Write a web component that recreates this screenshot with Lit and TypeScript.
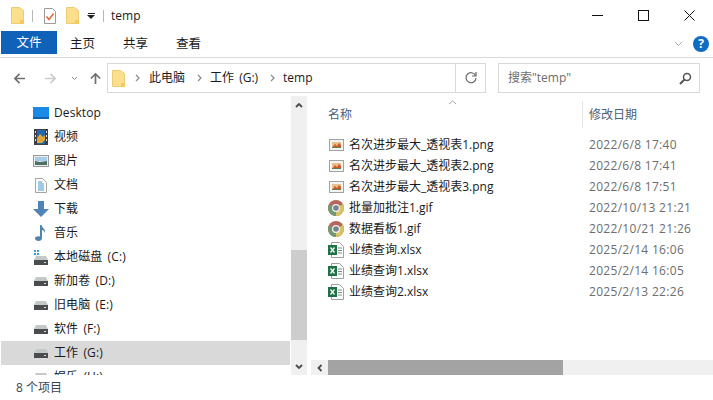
import { LitElement, html, css, svg } from 'lit';
import { customElement } from 'lit/decorators.js';

const folder = html`<svg class="folder" width="13" height="17" viewBox="0 0 13 17">
	<path d="M.5.500h8l4 3v13H.5z" fill="#fbdf8c" stroke="#eccb72" />
	<path d="M9 17v-4h4v4z" fill="#f6c95c" />
</svg>`;

const checkDoc = html`<svg width="12" height="16" viewBox="0 0 12 16">
	<path d="M.5.5h8l3 3v12H.5z" fill="#fff" stroke="#9a9a9a" />
	<path d="M2.500 8.500l2.500 3 4.500-6" fill="none" stroke="#e0693a" stroke-width="1.600" />
</svg>`;

const desktopIcon = html`<svg width="16" height="12" viewBox="0 0 16 12">
	<rect width="16" height="12" fill="#1a8ae6" />
	<rect y="10" width="16" height="2" fill="#0d63ad" />
</svg>`;

const videoIcon = html`<svg width="14" height="16" viewBox="0 0 14 16">
	<rect width="14" height="16" fill="#3c3f45" />
	<rect x="3" y="1" width="8" height="14" fill="#2467ad" />
	<path d="M3 9l3-4 3 3 2-2v5l-3 3H3z" fill="#e0a63a" />
	<path d="M1 2h1v2H1zm0 4h1v2H1zm0 4h1v2H1zm11-8h1v2h-1zm0 4h1v2h-1zm0 4h1v2h-1z" fill="#ddd" />
</svg>`;

const pictureIcon = html`<svg width="16" height="12" viewBox="0 0 16 12">
	<rect x=".5" y=".5" width="15" height="11" fill="#e8edf2" stroke="#9a9a9a" />
	<rect x="2" y="2" width="12" height="4" fill="#a8cbe8" />
	<path d="M2 6l5 1 7-1v4H2z" fill="#4f7164" />
</svg>`;

const docIcon = html`<svg width="12" height="15" viewBox="0 0 12 15">
	<path d="M.5.5h7l4 4v10H.5z" fill="#fdfdfd" stroke="#a5a5a5" />
	<path d="M3 4h4M3 6h6M3 8h6M3 10h6M3 12h6" stroke="#3f98cf" />
</svg>`;

const downloadIcon = html`<svg width="16" height="16" viewBox="0 0 16 16">
	<path d="M5 0h6v8h5l-8 8-8-8h5z" fill="#4f84b8" />
</svg>`;

const musicIcon = html`<svg width="12" height="16" viewBox="0 0 12 16">
	<path d="M5 0h1.500c.5 3 4.500 4 3.500 8-.5-2-2-3-3-3v8c0 2-1.500 3-3.500 3S0 15 0 13.500 2 11 5 11.500z" fill="#4f84ac" />
</svg>`;

const driveIcon = html`<svg width="14" height="10" viewBox="0 0 14 10">
	<path d="M2 1h10l2 4H0z" fill="#c4c8c8" />
	<rect y="5" width="14" height="5" fill="#4a4d50" />
	<rect x="10" y="7" width="2" height="1" fill="#ddd" />
</svg>`;

const systemDriveIcon = html`<svg width="14" height="15" viewBox="0 0 14 15">
	<path d="M0 0h2v2H0zm3 0h2v2H3zM0 3h2v2H0zm3 0h2v2H3z" fill="#3aa0dc" />
	<path d="M2 6h10l2 4H0z" fill="#c4c8c8" />
	<rect y="10" width="14" height="5" fill="#4a4d50" />
	<rect x="10" y="12" width="2" height="1" fill="#ddd" />
</svg>`;

const imageFile = html`<svg width="15" height="12" viewBox="0 0 15 12">
	<rect x=".5" y=".5" width="14" height="11" fill="#f4f4f4" stroke="#a2a2a2" />
	<rect x="3" y="3" width="9" height="6" fill="#e9c08c" />
	<path d="M3 9l3-4 2 2 2-3 2 2v3z" fill="#cf5a2e" />
	<path d="M3 8h9v1H3z" fill="#5f7d4a" />
</svg>`;

const chromeFile = html`<svg width="16" height="16" viewBox="0 0 16 16">
	<circle cx="8" cy="8" r="8" fill="#b5655a" />
	<path d="M8 8L14.900 4A8 8 0 0 1 8 16z" fill="#d8c468" />
	<path d="M8 8L8 16A8 8 0 0 1 1.100 4z" fill="#6f9a72" />
	<circle cx="8" cy="8" r="4" fill="#f2f2f2" />
	<circle cx="8" cy="8" r="2.800" fill="#77838c" />
</svg>`;

const excelFile = html`<svg width="16" height="16" viewBox="0 0 16 16">
	<path d="M3.500.5h8l4 4v11h-12z" fill="#fff" stroke="#9aa0a0" />
	<path d="M10 6h4M10 8.500h4M10 11h4" stroke="#7b8a85" />
	<rect y="3" width="9" height="10" fill="#1e7145" />
	<path d="M2.500 5.500l4 5m0-5l-4 5" stroke="#fff" stroke-width="1.300" />
</svg>`;

const chevronRight = html`<svg class="crumb-sep" width="5" height="8" viewBox="0 0 5 8">
	<path d="M1 1l3 3-3 3" fill="none" stroke="#8a8a8a" stroke-width="1.200" />
</svg>`;

const arrow = (d: string, color: string) => html`<svg width="13" height="13" viewBox="0 0 14 14">
	${svg`<path d=${d} fill="none" stroke=${color} stroke-width="1.800" />`}
</svg>`;

const scrollChevron = (d: string, w = 8, h = 8) => html`<svg width=${w} height=${h} viewBox="0 0 8 8">
	${svg`<path d=${d} fill="none" stroke="#4a4a4a" stroke-width="1.800" />`}
</svg>`;

const navItems = [
	{ icon: desktopIcon, label: 'Desktop' },
	{ icon: videoIcon, label: '视频' },
	{ icon: pictureIcon, label: '图片' },
	{ icon: docIcon, label: '文档' },
	{ icon: downloadIcon, label: '下载' },
	{ icon: musicIcon, label: '音乐' },
	{ icon: systemDriveIcon, label: '本地磁盘 (C:)' },
	{ icon: driveIcon, label: '新加卷 (D:)' },
	{ icon: driveIcon, label: '旧电脑 (E:)' },
	{ icon: driveIcon, label: '软件 (F:)' },
	{ icon: driveIcon, label: '工作 (G:)', selected: true },
	{ icon: driveIcon, label: '娱乐 (H:)' },
];

const files = [
	{ icon: imageFile, name: '名次进步最大_透视表1.png', date: '2022/6/8 17:40' },
	{ icon: imageFile, name: '名次进步最大_透视表2.png', date: '2022/6/8 17:41' },
	{ icon: imageFile, name: '名次进步最大_透视表3.png', date: '2022/6/8 17:51' },
	{ icon: chromeFile, name: '批量加批注1.gif', date: '2022/10/13 21:21' },
	{ icon: chromeFile, name: '数据看板1.gif', date: '2022/10/21 21:26' },
	{ icon: excelFile, name: '业绩查询.xlsx', date: '2025/2/14 16:06' },
	{ icon: excelFile, name: '业绩查询1.xlsx', date: '2025/2/14 16:05' },
	{ icon: excelFile, name: '业绩查询2.xlsx', date: '2025/2/13 22:26' },
];

@customElement('app-root')
export class AppRoot extends LitElement {
	static styles = css`
		:host {
			display: flex;
			flex-direction: column;
			width: 713px;
			height: 400px;
			overflow: hidden;
			background: #fff;
			color: #1a1a1a;
			font: 12px/16px 'Open Sans', 'Noto Sans CJK SC', sans-serif;
		}
		svg {
			flex: none;
		}
		.titlebar {
			display: flex;
			align-items: center;
			height: 31px;
			flex: none;
			padding-left: 11px;
		}
		.titlebar .divider {
			width: 1px;
			height: 12px;
			background: #b8b8b8;
			margin: 0 11px 0 8px;
		}
		.titlebar .qa-gap {
			width: 10px;
		}
		.dropdown {
			display: flex;
			margin-left: 8px;
			flex-direction: column;
			gap: 1px;
			align-items: center;
		}
		.dropdown i {
			display: block;
			width: 7px;
			height: 1px;
			background: #222;
		}
		.dropdown b {
			display: block;
			border: 4px solid transparent;
			border-bottom: 0;
			border-top-color: #222;
		}
		.titlebar .title {
			margin-left: -4px;
		}
		.window-buttons {
			margin-left: auto;
			display: flex;
			padding-right: 1px;
		}
		.window-buttons div {
			width: 46px;
			height: 30px;
			display: flex;
			align-items: center;
			justify-content: center;
		}
		.tabs {
			display: flex;
			align-items: center;
			height: 26px;
			flex: none;
			padding-left: 1px;
			border-bottom: 1px solid #dadada;
			box-sizing: content-box;
		}
		.tabs .tab {
			width: 53px;
			text-align: center;
			margin-bottom: 1px;
			font-size: 12.5px;
		}
		.tabs .tab.file {
			width: 56px;
			height: 23px;
			line-height: 23px;
			margin: 0 -1px 3px 0;
			background: #0f62b8;
			color: #fff;
		}
		.tabs .tail {
			margin-left: auto;
			display: flex;
			align-items: center;
			gap: 10px;
			padding-right: 4px;
		}
		.help {
			width: 16px;
			height: 16px;
			border-radius: 50%;
			background: #0e6cc4;
			color: #fff;
			font-weight: 700;
			font-size: 12px;
			line-height: 16px;
			text-align: center;
		}
		.nav {
			display: flex;
			align-items: center;
			height: 30px;
			flex: none;
			margin-top: 5px;
			padding-left: 13px;
		}
		.nav .arrows {
			display: flex;
			align-items: center;
			width: 94px;
		}
		.nav .forward {
			display: flex;
			margin: 0 14px 0 18px;
		}
		.nav .recent {
			margin-right: 11px;
		}
		.address {
			display: flex;
			align-items: center;
			width: 379px;
			height: 30px;
			box-sizing: border-box;
			border: 1px solid #d9d9d9;
			padding-left: 4px;
		}
		.address .folder {
			margin-right: 10px;
		}
		.address .crumb-sep {
			margin-right: 8px;
		}
		.address .folder + .crumb-sep {
			margin-right: 9px;
		}
		.address span {
			margin-right: 12px;
			word-spacing: 2px;
		}
		.address .refresh {
			margin-left: auto;
			width: 29px;
			height: 28px;
			border-left: 1px solid #d9d9d9;
			display: flex;
			align-items: center;
			justify-content: center;
		}
		.search {
			display: flex;
			align-items: center;
			justify-content: space-between;
			width: 202px;
			height: 30px;
			box-sizing: border-box;
			margin-left: 12px;
			padding: 0 7px 0 9px;
			border: 1px solid #d9d9d9;
			color: #6d6d6d;
		}
		.main {
			display: flex;
			flex: 1;
			min-height: 0;
			margin-top: 3px;
		}
		.sidebar {
			display: flex;
			width: 311px;
			flex: none;
		}
		.tree {
			width: 289px;
			margin-left: 1px;
			padding-top: 5px;
			overflow: hidden;
		}
		.tree-row {
			display: flex;
			align-items: center;
			height: 24px;
			word-spacing: 2px;
			letter-spacing: 0.1px;
		}
		.tree-row.selected {
			background: #d9d9d9;
		}
		.tree-row .icon {
			display: flex;
			justify-content: center;
			width: 16px;
			margin: 0 5px 0 32px;
		}
		.vscroll {
			display: flex;
			flex-direction: column;
			width: 16px;
			margin-left: 1px;
			background: #f0f0f0;
		}
		.vscroll .end {
			height: 17px;
			display: flex;
			align-items: center;
			justify-content: center;
			flex: none;
		}
		.vscroll .track {
			flex: 1;
			padding-top: 137px;
		}
		.vscroll .thumb {
			height: 90px;
			background: #cdcdcd;
		}
		.pane {
			display: flex;
			flex-direction: column;
			flex: 1;
			min-width: 0;
		}
		.list {
			flex: 1;
			min-height: 0;
			position: relative;
		}
		.header {
			display: flex;
			align-items: center;
			height: 27px;
			margin-top: 5px;
			color: #4c607a;
			padding-left: 17px;
		}
		.header .name-col {
			width: 254px;
		}
		.header .date-col {
			border-left: 1px solid #e5e5e5;
			height: 27px;
			line-height: 27px;
			padding-left: 6px;
		}
		.sort {
			position: absolute;
			left: 137px;
			top: 4px;
		}
		.rows {
			margin-top: 6px;
		}
		.file-row {
			display: flex;
			align-items: center;
			height: 21px;
			padding-left: 17px;
		}
		.file-row .icon {
			display: flex;
			justify-content: center;
			width: 16px;
			margin-right: 5px;
		}
		.file-row .name {
			width: 240px;
		}
		.file-row .date {
			color: #6d6d6d;
			letter-spacing: 0.3px;
		}
		.hscroll {
			display: flex;
			height: 15px;
			flex: none;
			background: #f0f0f0;
		}
		.hscroll .end {
			width: 17px;
			display: flex;
			align-items: center;
			justify-content: center;
		}
		.hscroll .thumb {
			width: 235px;
			background: #a3a3a3;
		}
		.status {
			height: 25px;
			line-height: 26px;
			flex: none;
			padding-left: 16px;
			color: #3a4550;
		}
	`;

	render() {
		return html`
			<div class="titlebar">
				${folder}
				<span class="divider"></span>
				${checkDoc}
				<span class="qa-gap"></span>
				${folder}
				<span class="dropdown"><i></i><b></b></span>
				<span class="divider"></span>
				<span class="title">temp</span>
				<div class="window-buttons">
					<div><svg width="11" height="1"><rect width="11" height="1" fill="#111" /></svg></div>
					<div><svg width="11" height="11"><rect x=".5" y=".5" width="10" height="10" fill="none" stroke="#111" /></svg></div>
					<div>
						<svg width="11" height="11"><path d="M.5.5l10 10m0-10l-10 10" stroke="#111" /></svg>
					</div>
				</div>
			</div>
			<div class="tabs">
				<div class="tab file">文件</div>
				<div class="tab">主页</div>
				<div class="tab">共享</div>
				<div class="tab">查看</div>
				<div class="tail">
					<svg width="9" height="6" viewBox="0 0 9 6"><path d="M1 1l3.500 3.500L8 1" fill="none" stroke="#a8a8a8" /></svg>
					<div class="help">?</div>
				</div>
			</div>
			<div class="nav">
				<div class="arrows">
					${arrow('M13 7H2M7 2L2 7l5 5', '#6f6f6f')}
					<span class="forward">${arrow('M1 7h11M7 2l5 5-5 5', '#cccccc')}</span>
					<svg class="recent" width="7" height="5" viewBox="0 0 7 5"><path d="M1 1l2.500 2.500L6 1" fill="none" stroke="#8a8a8a" /></svg>
					${arrow('M7 13V2M2 7l5-5 5 5', '#6f6f6f')}
				</div>
				<div class="address">
					${folder}${chevronRight}
					<span>此电脑</span>
					${chevronRight}
					<span>工作 (G:)</span>
					${chevronRight}
					<span>temp</span>
					<div class="refresh">
						<svg width="14" height="14" viewBox="0 0 14 14">
							<path d="M11.500 4.500A5 5 0 1 0 12 7" fill="none" stroke="#666" stroke-width="1.200" />
							<path d="M12 1v4H8" fill="none" stroke="#666" stroke-width="1.200" />
						</svg>
					</div>
				</div>
				<div class="search">
					<span>搜索"temp"</span>
					<svg width="13" height="13" viewBox="0 0 13 13">
						<circle cx="8" cy="5" r="3.500" fill="none" stroke="#555" stroke-width="1.500" />
						<path d="M5.500 7.500L1 12" stroke="#555" stroke-width="2" />
					</svg>
				</div>
			</div>
			<div class="main">
				<div class="sidebar">
					<div class="tree">
						${navItems.map(
							(item) => html`<div class="tree-row ${item.selected ? 'selected' : ''}">
								<span class="icon">${item.icon}</span>${item.label}
							</div>`,
						)}
					</div>
					<div class="vscroll">
						<div class="end">${scrollChevron('M1 6l3-3 3 3')}</div>
						<div class="track"><div class="thumb"></div></div>
						<div class="end">${scrollChevron('M1 2l3 3 3-3')}</div>
					</div>
				</div>
				<div class="pane">
					<div class="list">
						<svg class="sort" width="9" height="5" viewBox="0 0 9 5">
							<path d="M1 4l3.500-3L8 4" fill="none" stroke="#a8a8a8" />
						</svg>
						<div class="header">
							<div class="name-col">名称</div>
							<div class="date-col">修改日期</div>
						</div>
						<div class="rows">
							${files.map(
								(f) => html`<div class="file-row">
									<span class="icon">${f.icon}</span>
									<span class="name">${f.name}</span>
									<span class="date">${f.date}</span>
								</div>`,
							)}
						</div>
					</div>
					<div class="hscroll">
						<div class="end">${scrollChevron('M5.500 1l-3 3 3 3')}</div>
						<div class="thumb"></div>
					</div>
				</div>
			</div>
			<div class="status">8 个项目</div>
		`;
	}
}
